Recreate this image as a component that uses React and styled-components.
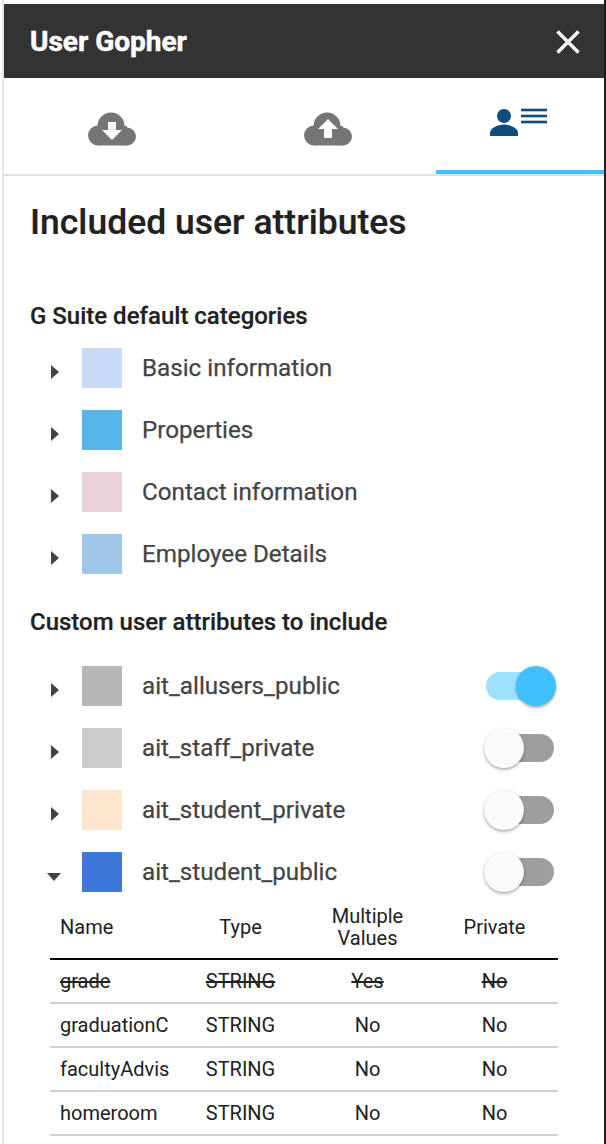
import React from "react";
import styled, { createGlobalStyle } from "styled-components";

const Global = createGlobalStyle`
  html, body { margin: 0; padding: 0; background: #fff; }
  body { font-family: Roboto, "Liberation Sans", sans-serif; }
  * { box-sizing: border-box; }
`;

const Shell = styled.div`
  width: 606px;
  height: 1144px;
  overflow: hidden;
  padding-left: 2px;
  border-right: 2px solid #1c1c1c;
`;
const Panel = styled.div`
  height: 100%;
  padding-top: 4px;
  border-left: 2px solid #e6e6e6;
  display: flex;
  flex-direction: column;
`;
const Header = styled.header`
  height: 74px;
  flex: none;
  background: #333;
  color: #fff;
  padding: 0 24px 0 26px;
  display: flex;
  align-items: center;
  justify-content: space-between;
`;
const Title = styled.div`
  font-size: 28px;
  font-weight: 700;
  -webkit-text-stroke: 0.5px #fff;
`;
const Close = styled.svg`
  width: 24px;
  height: 24px;
  margin-top: 2px;
`;
const Tabs = styled.nav`
  height: 98px;
  flex: none;
  display: grid;
  grid-template-columns: 216px 216px 168px;
  border-bottom: 2px solid #e0e0e0;
`;
const Tab = styled.div`
  display: flex;
  align-items: center;
  justify-content: center;
  padding-bottom: ${(p) => (p.$active ? "9px" : "0")};
  padding-top: ${(p) => (p.$active ? "0" : "10px")};
  padding-right: ${(p) => (p.$active ? "4px" : "0")};
  border-bottom: 4px solid ${(p) => (p.$active ? "#40c0ff" : "transparent")};
`;
const Body = styled.main`
  padding: 0 46px 0 26px;
`;
const H1 = styled.h1`
  margin: 26px 0 0;
  font-size: 35.5px;
  line-height: 40px;
  font-weight: 500;
  color: #212121;
  -webkit-text-stroke: 0.2px #212121;
`;
const H2 = styled.h2`
  margin: ${(p) => p.$top}px 0 0;
  font-size: 24px;
  line-height: 28px;
  font-weight: 500;
  color: #212121;
  -webkit-text-stroke: 0.2px #212121;
`;
const Rows = styled.div`
  margin-top: ${(p) => p.$top}px;
  display: flex;
  flex-direction: column;
  gap: 22px;
`;
const Row = styled.div`
  height: 40px;
  display: flex;
  align-items: center;
  padding-left: 16px;
`;
const Arrow = styled.span`
  width: 36px;
  flex: none;
  display: flex;
  align-items: center;
  padding-top: ${(p) => (p.$open ? "10px" : "8px")};
  padding-left: ${(p) => (p.$open ? "1px" : "5px")};
`;
const RightTri = styled.i`
  width: 0;
  height: 0;
  border-left: 8px solid #444;
  border-top: 7.5px solid transparent;
  border-bottom: 7.5px solid transparent;
`;
const DownTri = styled.i`
  width: 0;
  height: 0;
  border-top: 8px solid #444;
  border-left: 7.5px solid transparent;
  border-right: 7.5px solid transparent;
`;
const Swatch = styled.span`
  width: 40px;
  height: 40px;
  flex: none;
  background: ${(p) => p.$color};
`;
const Label = styled.span`
  margin-left: 20px;
  font-size: 24.2px;
  color: #444;
  flex: 1;
  padding-bottom: 1px;
  -webkit-text-stroke: 0.25px #444;
`;
const Toggle = styled.span`
  position: relative;
  width: 68px;
  height: 28px;
  border-radius: 14px;
  flex: none;
  margin-right: 4px;
  background: ${(p) => (p.$on ? "#9fdfff" : "#9e9e9e")};
`;
const Thumb = styled.span`
  position: absolute;
  top: -6px;
  left: ${(p) => (p.$on ? "30px" : "-2px")};
  width: 40px;
  height: 40px;
  border-radius: 50%;
  background: ${(p) => (p.$on ? "#40c0ff" : "#fafafa")};
  box-shadow: 0 2px 3px rgba(0, 0, 0, 0.28), 0 0 2px rgba(0, 0, 0, 0.12);
`;
const Table = styled.table`
  width: 508px;
  margin: 6px 0 0 20px;
  border-collapse: collapse;
  table-layout: fixed;
  font-size: 20px;
  color: #212121;
`;
const Th = styled.th`
  height: 61px;
  font-weight: 400;
  line-height: 22px;
  text-align: ${(p) => (p.$left ? "left" : "center")};
  padding: 0 0 3px ${(p) => (p.$left ? "10px" : "0")};
  border-bottom: 2px solid #000;
`;
const Td = styled.td`
  height: 44px;
  padding: 0 0 0 ${(p) => (p.$left ? "10px" : "0")};
  text-align: ${(p) => (p.$left ? "left" : "center")};
  border-bottom: 2px solid #d0d0d0;
  white-space: nowrap;
  overflow: hidden;
  text-decoration: ${(p) => (p.$strike ? "line-through" : "none")};
`;

const Cloud = ({ children }) => (
  <svg width="48" height="34" viewBox="0 0 48 34" aria-hidden="true">
    <g fill="#757575">
      <circle cx="23" cy="14" r="13.5" />
      <circle cx="10" cy="23.5" r="10" />
      <circle cx="39" cy="24.5" r="9" />
      <rect x="10" y="14" width="29" height="19.5" />
    </g>
    <g fill="#fff">{children}</g>
  </svg>
);

const PersonList = () => (
  <svg width="60" height="33" viewBox="0 0 60 33" fill="#0d4c7d" aria-hidden="true">
    <circle cx="16" cy="13" r="7" />
    <path d="M2 33v-3c0-5 8-8.5 14-8.5S30 25 30 30v3z" />
    <rect x="33" y="5.7" width="26" height="2.6" />
    <rect x="33" y="11.7" width="26" height="2.6" />
    <rect x="33" y="17.7" width="26" height="2.6" />
  </svg>
);

const defaults = [
  ["Basic information", "#c9daf8"],
  ["Properties", "#56b5ea"],
  ["Contact information", "#ead1dc"],
  ["Employee Details", "#9fc5e8"],
];
const customs = [
  ["ait_allusers_public", "#b7b7b7", true, false],
  ["ait_staff_private", "#cccccc", false, false],
  ["ait_student_private", "#fce5cd", false, false],
  ["ait_student_public", "#3c78d8", false, true],
];
const attrs = [
  ["grade", "STRING", "Yes", "No", true],
  ["graduationC", "STRING", "No", "No", false],
  ["facultyAdvis", "STRING", "No", "No", false],
  ["homeroom", "STRING", "No", "No", false],
];

export default function App() {
  return (
    <Shell>
      <Global />
      <Panel>
        <Header>
          <Title>User Gopher</Title>
          <Close viewBox="0 0 24 24" aria-label="Close">
            <path d="M1.5 1.5l21 21M22.5 1.5l-21 21" stroke="#fff" strokeWidth="3.4" fill="none" />
          </Close>
        </Header>
        <Tabs>
          <Tab>
            <Cloud>
              <path d="M20 10h8v8h6L24 28 14 18h6z" />
            </Cloud>
          </Tab>
          <Tab>
            <Cloud>
              <path d="M24 7l10 10h-6v9h-8v-9h-6z" />
            </Cloud>
          </Tab>
          <Tab $active><PersonList /></Tab>
        </Tabs>
        <Body>
          <H1>Included user attributes</H1>
          <H2 $top={60}>G Suite default categories</H2>
          <Rows $top={18}>
            {defaults.map(([name, color]) => (
              <Row key={name}>
                <Arrow><RightTri /></Arrow>
                <Swatch $color={color} />
                <Label>{name}</Label>
              </Row>
            ))}
          </Rows>
          <H2 $top={34}>Custom user attributes to include</H2>
          <Rows $top={30}>
            {customs.map(([name, color, on, open]) => (
              <Row key={name}>
                <Arrow $open={open}>{open ? <DownTri /> : <RightTri />}</Arrow>
                <Swatch $color={color} />
                <Label>{name}</Label>
                <Toggle $on={on}><Thumb $on={on} /></Toggle>
              </Row>
            ))}
          </Rows>
          <Table>
            <thead>
              <tr>
                <Th $left>Name</Th>
                <Th>Type</Th>
                <Th>Multiple<br />Values</Th>
                <Th>Private</Th>
              </tr>
            </thead>
            <tbody>
              {attrs.map(([name, type, multi, priv, strike]) => (
                <tr key={name}>
                  <Td $left $strike={strike}>{name}</Td>
                  <Td $strike={strike}>{type}</Td>
                  <Td $strike={strike}>{multi}</Td>
                  <Td $strike={strike}>{priv}</Td>
                </tr>
              ))}
            </tbody>
          </Table>
        </Body>
      </Panel>
    </Shell>
  );
}
